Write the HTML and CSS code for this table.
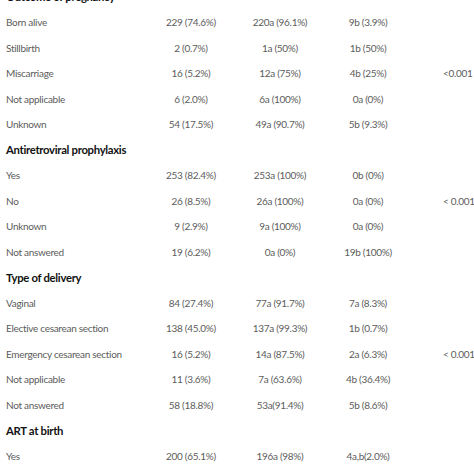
FILE: index.html
```html
<!DOCTYPE html>
<html>
<head>
<meta charset="utf-8">
<link rel="stylesheet" href="styles.css">
</head>
<body>
<div class="table">
  <div class="row head"><div class="label">Outcome of pregnancy</div></div>
  <div class="row"><div class="label">Born alive</div><div class="c">229 (74.6%)</div><div class="c">220a (96.1%)</div><div class="c">9b (3.9%)</div><div class="p"></div></div>
  <div class="row"><div class="label">Stillbirth</div><div class="c">2 (0.7%)</div><div class="c">1a (50%)</div><div class="c">1b (50%)</div><div class="p"></div></div>
  <div class="row"><div class="label">Miscarriage</div><div class="c">16 (5.2%)</div><div class="c">12a (75%)</div><div class="c">4b (25%)</div><div class="p">&lt;0.001</div></div>
  <div class="row"><div class="label">Not applicable</div><div class="c">6 (2.0%)</div><div class="c">6a (100%)</div><div class="c">0a (0%)</div><div class="p"></div></div>
  <div class="row"><div class="label">Unknown</div><div class="c">54 (17.5%)</div><div class="c">49a (90.7%)</div><div class="c">5b (9.3%)</div><div class="p"></div></div>
  <div class="row head"><div class="label">Antiretroviral prophylaxis</div></div>
  <div class="row"><div class="label">Yes</div><div class="c">253 (82.4%)</div><div class="c">253a (100%)</div><div class="c">0b (0%)</div><div class="p"></div></div>
  <div class="row"><div class="label">No</div><div class="c">26 (8.5%)</div><div class="c">26a (100%)</div><div class="c">0a (0%)</div><div class="p">&lt; 0.001</div></div>
  <div class="row"><div class="label">Unknown</div><div class="c">9 (2.9%)</div><div class="c">9a (100%)</div><div class="c">0a (0%)</div><div class="p"></div></div>
  <div class="row"><div class="label">Not answered</div><div class="c">19 (6.2%)</div><div class="c">0a (0%)</div><div class="c">19b (100%)</div><div class="p"></div></div>
  <div class="row head"><div class="label">Type of delivery</div></div>
  <div class="row"><div class="label">Vaginal</div><div class="c">84 (27.4%)</div><div class="c">77a (91.7%)</div><div class="c">7a (8.3%)</div><div class="p"></div></div>
  <div class="row"><div class="label">Elective cesarean section</div><div class="c">138 (45.0%)</div><div class="c">137a (99.3%)</div><div class="c">1b (0.7%)</div><div class="p"></div></div>
  <div class="row"><div class="label">Emergency cesarean section</div><div class="c">16 (5.2%)</div><div class="c">14a (87.5%)</div><div class="c">2a (6.3%)</div><div class="p">&lt; 0.001</div></div>
  <div class="row"><div class="label">Not applicable</div><div class="c">11 (3.6%)</div><div class="c">7a (63.6%)</div><div class="c">4b (36.4%)</div><div class="p"></div></div>
  <div class="row"><div class="label">Not answered</div><div class="c">58 (18.8%)</div><div class="c">53a(91.4%)</div><div class="c">5b (8.6%)</div><div class="p"></div></div>
  <div class="row head"><div class="label">ART at birth</div></div>
  <div class="row"><div class="label">Yes</div><div class="c">200 (65.1%)</div><div class="c">196a (98%)</div><div class="c">4a,b(2.0%)</div><div class="p"></div></div>
</div>
</body>
</html>
```
FILE: styles.css
```css
html, body {
  margin: 0;
  padding: 0;
  background: #ffffff;
  overflow: hidden;
}
body {
  font-family: Lato, "Open Sans", sans-serif;
  font-size: 10px;
  letter-spacing: -0.3px;
  color: #5c5c5c;
}
.table {
  margin-top: -16px;
  padding-left: 6px;
}
.row {
  display: grid;
  grid-template-columns: 140px 90px 88px 88px 62px;
  height: 25.5px;
  align-items: center;
  white-space: nowrap;
}
.c {
  text-align: center;
}
.p {
  padding-left: 31px;
}
.head .label {
  font-weight: 700;
  color: #111111;
  font-size: 11.3px;
}
```
